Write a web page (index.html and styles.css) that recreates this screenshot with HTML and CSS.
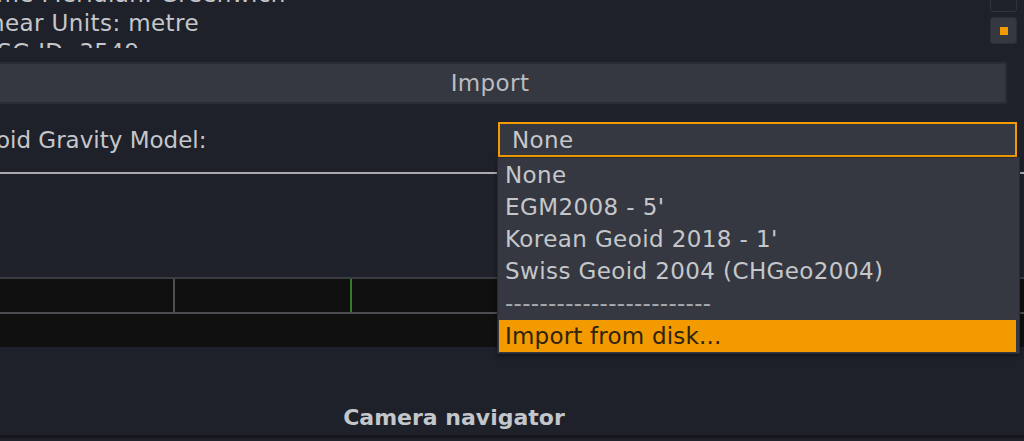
FILE: index.html
```html
<!DOCTYPE html>
<html>
<head>
<meta charset="utf-8">
<link rel="stylesheet" href="styles.css">
</head>
<body>
<div class="panel">
  <div class="info-row">
    <div class="info">
      <div class="info-lines">
        <div class="line l1">Prime Meridian: Greenwich</div>
        <div class="line l2">Linear Units: metre</div>
        <div class="line l3">EPSG ID: 3549</div>
      </div>
    </div>
    <div class="scrollbar">
      <div class="sb-box"></div>
      <div class="sb-btn"><span class="sb-dot"></span></div>
    </div>
  </div>

  <div class="import-btn">Import</div>

  <div class="geoid-row">
    <div class="geoid-label">Geoid Gravity Model:</div>
    <div class="combo-wrap">
      <div class="combo">None</div>
      <ul class="popup">
        <li class="item">None</li>
        <li class="item">EGM2008 - 5'</li>
        <li class="item">Korean Geoid 2018 - 1'</li>
        <li class="item">Swiss Geoid 2004 (CHGeo2004)</li>
        <li class="item sep">------------------------</li>
        <li class="item active">Import from disk...</li>
      </ul>
    </div>
  </div>

  <div class="rule"></div>

  <div class="strip">
    <div class="strip-top">
      <span class="tick grey"></span>
      <span class="tick green"></span>
    </div>
    <div class="strip-bottom"></div>
  </div>

  <div class="camera">
    <div class="camera-title">Camera navigator</div>
  </div>
</div>
</body>
</html>
```

FILE: styles.css
```css
html, body {
  margin: 0;
  padding: 0;
}
body {
  width: 1024px;
  height: 441px;
  overflow: hidden;
  background: #1e212a;
  font-family: "DejaVu Sans", Verdana, sans-serif;
  font-size: 23px;
  letter-spacing: 0.4px;
  color: #c5c7ca;
}
.panel {
  display: flex;
  flex-direction: column;
}

/* info area */
.info-row {
  display: flex;
  height: 48px;
}
.info {
  flex: 1;
  overflow: hidden;
}
.info-lines {
  margin-top: -20px;
  line-height: 29px;
  white-space: nowrap;
}
.l1 { margin-left: -34px; }
.l2 { margin-left: -30px; }
.l3 { margin-left: -32px; }

.scrollbar {
  width: 27px;
  margin-right: 7px;
  display: flex;
  flex-direction: column;
  gap: 5px;
}
.sb-box {
  height: 16px;
  margin-top: -4px;
  border: 1px solid #30333b;
  border-radius: 3px;
  box-sizing: border-box;
}
.sb-btn {
  height: 27px;
  background: #353841;
  border: 1px solid #2b2e35;
  border-radius: 3px;
  box-sizing: border-box;
  display: flex;
  align-items: center;
  justify-content: center;
}
.sb-dot {
  width: 8px;
  height: 8px;
  background: #f39a00;
}

/* import button */
.import-btn {
  margin-top: 14px;
  margin-left: -27px;
  margin-right: 17px;
  height: 42px;
  box-sizing: border-box;
  background: #353841;
  border: 2px solid #2a2d34;
  display: flex;
  align-items: center;
  justify-content: center;
  color: #b9bcc0;
}

/* geoid row */
.geoid-row {
  margin-top: 18px;
  height: 35px;
  display: flex;
  align-items: center;
}
.geoid-label {
  flex: 1;
  margin-left: -36px;
  letter-spacing: 0;
  white-space: nowrap;
}
.combo-wrap {
  position: relative;
  width: 519px;
  margin-right: 7px;
  height: 35px;
}
.combo {
  height: 35px;
  box-sizing: border-box;
  border: 2px solid #f39a00;
  background: #353841;
  padding-left: 12px;
  display: flex;
  align-items: center;
}
.popup {
  position: absolute;
  left: -1px;
  top: 35px;
  width: 523px;
  box-sizing: border-box;
  margin: 0;
  padding: 1px 1px 1px 1px;
  list-style: none;
  background: #353841;
  border: 1px solid #282b31;
  box-shadow: 0 2px 4px rgba(0,0,0,0.4);
  z-index: 2;
}
.item {
  height: 32px;
  line-height: 32px;
  padding-left: 6px;
  white-space: nowrap;
}
.item.sep {
  color: #a8abb0;
  letter-spacing: 0.3px;
}
.item.active {
  background: #f39a00;
  color: #2e2410;
  margin-right: 2px;
  margin-top: 1px;
  letter-spacing: 0.2px;
}

/* rule */
.rule {
  margin-top: 15px;
  height: 2px;
  background: #a9abae;
}

/* dark strip */
.strip {
  margin-top: 103px;
  height: 70px;
  display: flex;
  flex-direction: column;
}
.strip-top {
  height: 33px;
  background: #0f0f10;
  border-top: 2px solid #3b3d42;
  border-bottom: 2px solid #4c4d50;
  display: flex;
}
.tick {
  width: 2px;
  height: 100%;
}
.tick.grey {
  margin-left: 173px;
  background: #4e4f52;
}
.tick.green {
  margin-left: 175px;
  background: #2f7d2a;
}
.strip-bottom {
  flex: 1;
  background: #101011;
}

/* camera title */
.camera {
  height: 91px;
  box-sizing: border-box;
  padding-top: 57px;
  padding-right: 116px;
  border-bottom: 3px solid #15171c;
  text-align: center;
}
.camera-title {
  font-weight: bold;
  font-size: 22px;
  line-height: 28px;
  letter-spacing: 0;
  color: #c3c6ca;
}
```
